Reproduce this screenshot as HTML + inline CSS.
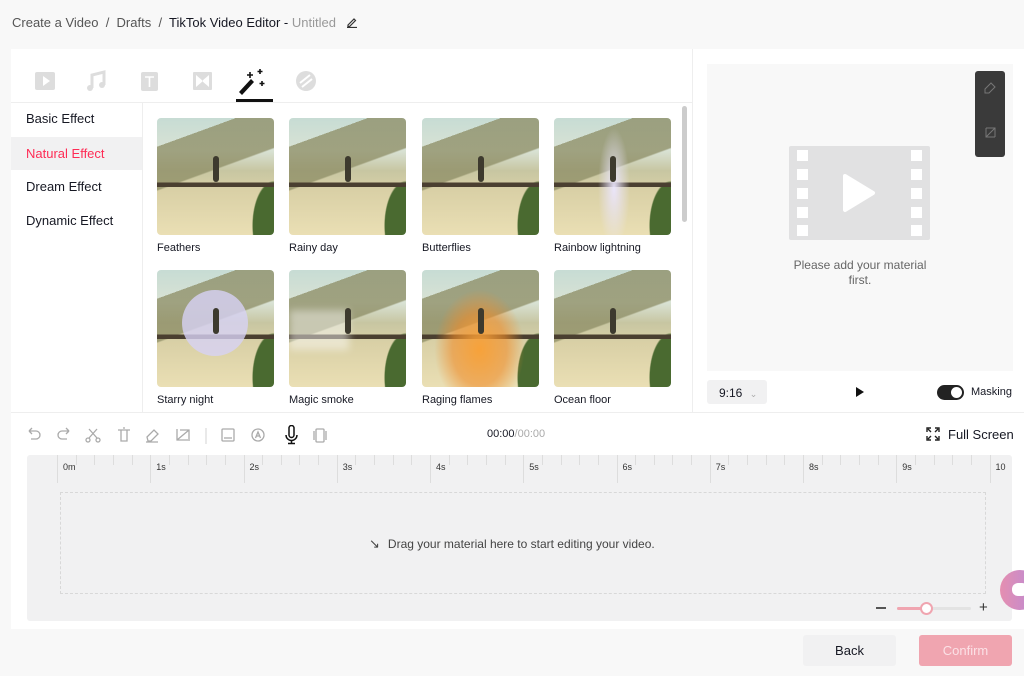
<!DOCTYPE html>
<html><head><meta charset="utf-8"><style>
*{box-sizing:border-box;margin:0;padding:0}
body{width:1024px;height:676px;overflow:hidden;background:#f8f8f8;font-family:"Liberation Sans",sans-serif;color:#161823;position:relative}
.abs{position:absolute}
.crumb{left:12px;top:15px;font-size:13px;color:#555}
.crumb b{color:#161823;font-weight:normal}
.crumb i{font-style:normal;color:#999}
.panel{left:11px;top:49px;width:1013px;height:580px;background:#fff}
.thumb{position:absolute;width:117px;height:117px;border-radius:4px;overflow:hidden;
background:
linear-gradient(180deg,rgba(0,0,0,0) 0 55%,#4a3f30 55% 59%,rgba(0,0,0,0) 59%),
radial-gradient(ellipse 22px 45px at 100% 92%,#4a6a30 0 95%,rgba(0,0,0,0) 100%),
linear-gradient(160deg,rgba(0,0,0,0) 0 18%,rgba(140,140,100,.75) 18% 45%,rgba(0,0,0,0) 46%),
linear-gradient(180deg,#c7dcd4 0%,#d9e2d4 28%,#c7c6a2 45%,#d9d0a6 62%,#eadfb4 100%)}
.thumb::after{content:"";position:absolute;left:56px;top:38px;width:6px;height:26px;background:#3d3a2e;border-radius:3px}
.lbl{position:absolute;font-size:11px;color:#161823}
.menu{position:absolute;left:11px;width:131px;height:34px;font-size:13px;padding:9px 0 0 15px}
.tick{position:absolute;top:455px;width:1px;background:#ddd}
.rl{position:absolute;top:462px;font-size:9px;color:#333}
</style></head><body>
<div class="abs crumb">Create a Video &nbsp;/&nbsp; Drafts &nbsp;/&nbsp; <b>TikTok Video Editor -</b> <i>Untitled</i>
<svg width="12" height="12" viewBox="0 0 12 12" style="margin-left:6px;vertical-align:-1px"><path d="M2 9l6-6 1.5 1.5-6 6H2z M1 11.5h10" fill="none" stroke="#333" stroke-width="1.2"/></svg></div>
<div class="abs panel"></div>
<div class="abs" style="left:11px;top:102px;width:681px;height:1px;background:#eee"></div>
<svg class="abs" style="left:30px;top:66px" width="290" height="36" viewBox="0 0 290 36">
<g fill="#ddd"><rect x="5" y="6" width="20" height="18" rx="2"/></g>
<path d="M13 10v10l7-5z" fill="#fff"/>
<path d="M62 22V9l12-3v13" fill="none" stroke="#ddd" stroke-width="3"/><circle cx="60" cy="22" r="3" fill="#ddd"/><circle cx="72" cy="19" r="3" fill="#ddd"/>
<rect x="111" y="6" width="17" height="19" rx="2" fill="#ddd"/><path d="M115 11h9M119.5 11v10" stroke="#fff" stroke-width="1.6"/>
<rect x="163" y="6" width="19" height="18" rx="1" fill="#ddd"/><path d="M166 9l7 6-7 6zM179 9l-7 6 7 6z" fill="#fff"/>
<path d="M209 26l12-13 3 3-12 13z" fill="#111"/><path d="M220 6v6M217 9h6M230 3v5M227.5 5.5h5M232 15v5M229.5 17.5h5" stroke="#111" stroke-width="1.6"/>
<circle cx="276" cy="15" r="10" fill="#ddd"/><path d="M270 17l10-8M272 21l10-8" stroke="#fff" stroke-width="2"/>
</svg>
<div class="abs" style="left:236px;top:99px;width:37px;height:3px;background:#111"></div>
<div class="abs" style="left:142px;top:103px;width:1px;height:309px;background:#eee"></div>
<div class="menu" style="top:102px">Basic Effect</div>
<div class="menu" style="top:137px;background:#f1f1f2;color:#fe2c55;height:33px">Natural Effect</div>
<div class="menu" style="top:170px">Dream Effect</div>
<div class="menu" style="top:204px">Dynamic Effect</div>
<div class="thumb" style="left:157px;top:118px"></div>
<div class="thumb" style="left:289px;top:118px"></div>
<div class="thumb" style="left:422px;top:118px"></div>
<div class="thumb" style="left:554px;top:118px"><div style="position:absolute;left:42px;top:0;width:36px;height:117px;background:radial-gradient(ellipse 16px 60px at 50% 60%,rgba(235,230,255,.95),rgba(180,170,255,0))"></div></div>
<div class="thumb" style="left:157px;top:270px"><div style="position:absolute;left:25px;top:20px;width:66px;height:66px;border-radius:50%;background:rgba(215,210,245,.8)"></div></div>
<div class="thumb" style="left:289px;top:270px"><div style="position:absolute;left:0;top:40px;width:60px;height:40px;background:rgba(255,255,255,.45);filter:blur(4px)"></div></div>
<div class="thumb" style="left:422px;top:270px"><div style="position:absolute;left:10px;top:10px;width:95px;height:107px;background:radial-gradient(ellipse 45px 60px at 50% 65%,#f7a23a,rgba(240,140,40,.6) 60%,rgba(240,140,40,0))"></div></div>
<div class="thumb" style="left:554px;top:270px"></div>
<div class="lbl" style="left:157px;top:242px">Feathers</div>
<div class="lbl" style="left:289px;top:242px">Rainy day</div>
<div class="lbl" style="left:422px;top:242px">Butterflies</div>
<div class="lbl" style="left:554px;top:242px">Rainbow lightning</div>
<div style="position:absolute;left:143px;top:387px;width:540px;height:25px;overflow:hidden">
<div class="lbl" style="left:14px;top:7px">Starry night</div>
<div class="lbl" style="left:146px;top:7px">Magic smoke</div>
<div class="lbl" style="left:279px;top:7px">Raging flames</div>
<div class="lbl" style="left:411px;top:7px">Ocean floor</div></div>
<div class="abs" style="left:682px;top:106px;width:5px;height:116px;border-radius:3px;background:#ccc"></div>
<div class="abs" style="left:692px;top:49px;width:1px;height:363px;background:#eee"></div>
<div class="abs" style="left:11px;top:412px;width:1013px;height:1px;background:#eee"></div>
<div class="abs" style="left:707px;top:64px;width:306px;height:307px;background:#f8f8f8"></div>
<div class="abs" style="left:975px;top:71px;width:30px;height:86px;border-radius:3px;background:#3a3a3a"></div>
<svg class="abs" style="left:982px;top:80px" width="16" height="70"><path d="M3 9l6-6 4 4-6 6H3z" fill="none" stroke="#777"/><path d="M4 48h9v9M4 48v9h9M4 57l9-9" fill="none" stroke="#777"/></svg>
<svg class="abs" style="left:789px;top:146px" width="141" height="94"><rect width="141" height="94" rx="2" fill="#e1e1e2"/>
<g fill="#fff"><rect x="8" y="4" width="11" height="11"/><rect x="8" y="23" width="11" height="11"/><rect x="8" y="42" width="11" height="11"/><rect x="8" y="61" width="11" height="11"/><rect x="8" y="79" width="11" height="11"/>
<rect x="122" y="4" width="11" height="11"/><rect x="122" y="23" width="11" height="11"/><rect x="122" y="42" width="11" height="11"/><rect x="122" y="61" width="11" height="11"/><rect x="122" y="79" width="11" height="11"/>
<path d="M56 30l28 17-28 17z" stroke="#fff" stroke-width="4" stroke-linejoin="round"/></g></svg>
<div class="abs" style="left:707px;top:258px;width:306px;text-align:center;font-size:12px;line-height:15px;color:#666">Please add your material<br>first.</div>
<div class="abs" style="left:707px;top:380px;width:60px;height:24px;background:#f1f1f2;border-radius:3px;font-size:12px;padding:6px 0 0 12px">9:16 <span style="color:#aaa;font-size:9px;margin-left:4px">&#8964;</span></div>
<svg class="abs" style="left:855px;top:387px" width="10" height="10"><path d="M1 0l8 5-8 5z" fill="#111"/></svg>
<div class="abs" style="left:937px;top:385px;width:27px;height:15px;border-radius:8px;background:#222"><div style="position:absolute;right:2px;top:2px;width:11px;height:11px;border-radius:50%;background:#fff"></div></div>
<div class="abs" style="left:971px;top:386px;font-size:11px">Masking</div>
<svg class="abs" style="left:25px;top:425px" width="310" height="20" fill="none" stroke="#aaa" stroke-width="1.3">
<path d="M4 6h7a4 4 0 010 8H6M4 6l3-3M4 6l3 3"/>
<path d="M44 6h-7a4 4 0 000 8h5M44 6l-3-3M44 6l-3 3"/>
<path d="M64 4l8 9M72 4l-8 9"/><circle cx="63" cy="15" r="2"/><circle cx="73" cy="15" r="2"/>
<path d="M93 5h12M96 5v11h6V5M98 3h2"/>
<path d="M122 12l7-7 4 4-7 7h-3zM121 17h12"/>
<path d="M152 4v11h11M155 5h9v11M152 15l12-10"/>
<path d="M181 3v16" stroke="#ddd"/>
<rect x="197" y="4" width="12" height="12" rx="1"/><path d="M199 13h8"/>
<circle cx="233" cy="10" r="6"/><path d="M230.5 13l2.5-6 2.5 6M231 11h4"/>
<path d="M264 3a2.5 2.5 0 015 0v7a2.5 2.5 0 01-5 0zM261 10a5.5 5.5 0 0011 0M266.5 15.5v3M263 18.5h7" stroke="#111" stroke-width="1.5"/>
<rect x="291" y="4" width="8" height="13" rx="1"/><path d="M289 6v9M301 6v9"/>
</svg>
<div class="abs" style="left:487px;top:428px;font-size:11px">00:00<span style="color:#aaa">/00:00</span></div>
<svg class="abs" style="left:926px;top:427px" width="14" height="14" fill="none" stroke="#222" stroke-width="1.4"><path d="M1 5V1h4M9 1h4v4M13 9v4H9M5 13H1V9M2 2l3 3M12 2l-3 3M12 12l-3-3M2 12l3-3"/></svg>
<div class="abs" style="left:948px;top:427px;font-size:13px">Full Screen</div>
<div class="abs" style="left:27px;top:455px;width:985px;height:166px;background:#f1f1f2;border-radius:3px"></div>
<div id="ticks"></div>
<div class="abs" style="left:60px;top:492px;width:926px;height:102px;border:1px dashed #d8d8d8"></div>
<div class="abs" style="left:369px;top:536px;font-size:12px;color:#444"><span style="font-size:13px;margin-right:8px">&#8600;</span>Drag your material here to start editing your video.</div>
<div class="abs" style="left:876px;top:607px;width:10px;height:1.5px;background:#555"></div>
<div class="abs" style="left:897px;top:607px;width:74px;height:3px;background:#e3e3e3;border-radius:2px"></div>
<div class="abs" style="left:897px;top:607px;width:30px;height:3px;background:#f0a5b0;border-radius:2px"></div>
<div class="abs" style="left:920px;top:602px;width:13px;height:13px;border-radius:50%;background:#fff;border:2px solid #f0a5b0"></div>
<div class="abs" style="left:979px;top:599px;font-size:15px;color:#333">+</div>
<div class="abs" style="left:1000px;top:570px;width:40px;height:40px;border-radius:50%;background:linear-gradient(90deg,#e58fb0,#b98ad8)"><div style="position:absolute;left:12px;top:13px;width:16px;height:13px;border-radius:6px;background:#fff"></div></div>
<div class="abs" style="left:803px;top:635px;width:93px;height:31px;background:#f1f1f2;border-radius:3px;font-size:13px;text-align:center;line-height:31px">Back</div>
<div class="abs" style="left:919px;top:635px;width:93px;height:31px;background:#f0a5b0;border-radius:3px;font-size:13px;text-align:center;line-height:31px;color:#fbe1e6">Confirm</div>
<script>
var h='',labels=['0m','1s','2s','3s','4s','5s','6s','7s','8s','9s','10'];
for(var i=0;i<=53;i++){var x=57+i*18.65;if(x>1008)break;var maj=i%5==0;
h+='<div class="tick" style="left:'+x.toFixed(1)+'px;height:'+(maj?28:10)+'px"></div>';
if(maj)h+='<div class="rl" style="left:'+(x+6).toFixed(1)+'px">'+labels[i/5]+'</div>';}
document.getElementById('ticks').innerHTML=h;
</script>
</body></html>
